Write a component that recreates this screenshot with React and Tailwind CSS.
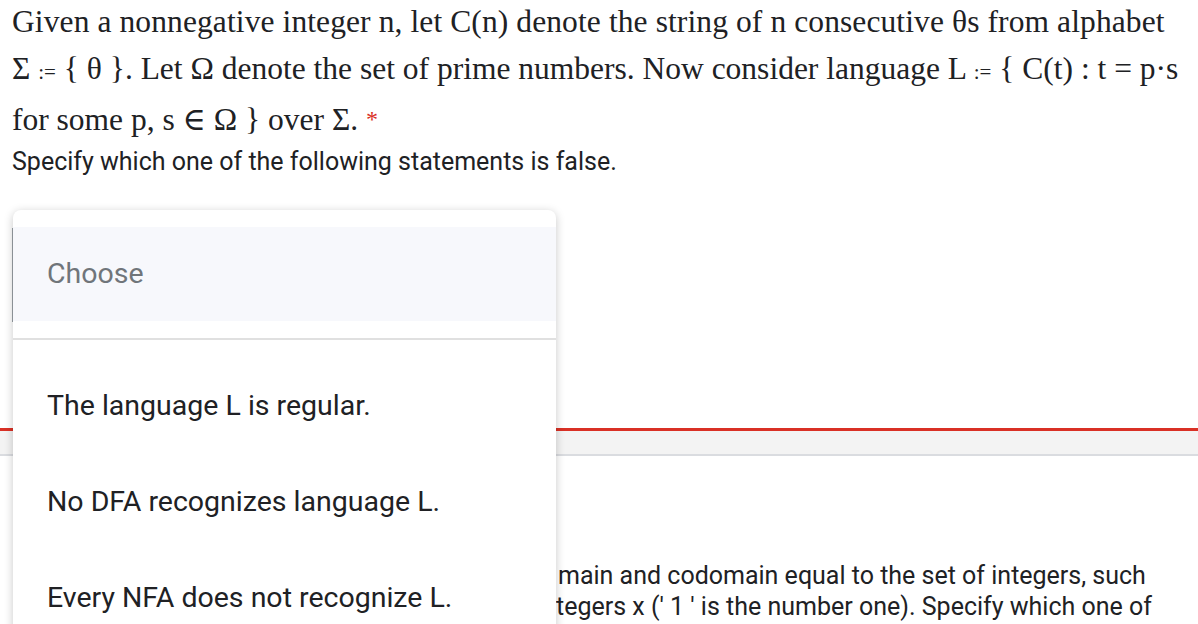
import React from "react";

const serif = { fontFamily: '"Liberation Serif", "DejaVu Serif", serif' };

const options = [
  "The language L is regular.",
  "No DFA recognizes language L.",
  "Every NFA does not recognize L.",
];

const Dropdown = () => (
  <div className="absolute left-[13px] top-[210px] w-[543px] h-[430px] bg-white rounded-t-lg shadow-[0_2px_10px_rgba(0,0,0,0.22)] pt-[17px]">
    <div className="h-[94px] bg-[#f7f8fc] flex items-center px-[34px] text-[28.5px] text-[#70757a]">
      Choose
    </div>
    <div className="h-[17px]" />
    <div className="h-[2px] bg-[#e0e0e0]" />
    <div className="pt-[18px]">
      {options.map((o) => (
        <div key={o} className="h-[96px] flex items-center px-[34px] text-[28.5px] text-[#202124]">
          {o}
        </div>
      ))}
    </div>
  </div>
);

export default function App() {
  return (
    <div
      className="relative w-[1198px] h-[624px] overflow-hidden bg-white text-[#202124]"
      style={{ fontFamily: "Roboto, Arial, sans-serif" }}
    >
      <div className="px-[12px]">
        <div className="h-[141px] text-[31.5px] leading-[47px] whitespace-nowrap -mt-[2px]" style={serif}>
          <div className="tracking-[0.1px]">Given a nonnegative integer n, let C(n) denote the string of n consecutive θs from alphabet</div>
          <div>
            Σ <span className="text-[21px]">:=</span> {"{"} θ {"}"}. Let Ω denote the set of prime numbers. Now consider language L{" "}
            <span className="text-[21px]">:=</span> {"{"} C(t) : t = p·s
          </div>
          <div>
            for some p, s ∈ Ω {"}"} over Σ. <span className="text-[#d93025] text-[24px] align-top">*</span>
          </div>
        </div>
        <div className="mt-[7px] text-[25px] leading-[31px]">Specify which one of the following statements is false.</div>
        <div className="mt-[51px] h-[94px] w-[300px] border-l border-[#9aa0a6]" />
      </div>
      <div className="mt-[106px] h-[3px] bg-[#d93025]" />
      <div className="h-[23px] bg-[#f3f3f3]" />
      <div className="h-[2px] bg-[#dadce0]" />
      <div className="pt-[104px] px-[12px] text-[25px] leading-[31px] whitespace-nowrap">
        <div className="flex">
          <span className="w-[546px]" />
          <span>main and codomain equal to the set of integers, such</span>
        </div>
        <div className="flex">
          <span className="w-[544px]" />
          <span>tegers x (' 1 ' is the number one). Specify which one of</span>
        </div>
      </div>
      <Dropdown />
    </div>
  );
}
